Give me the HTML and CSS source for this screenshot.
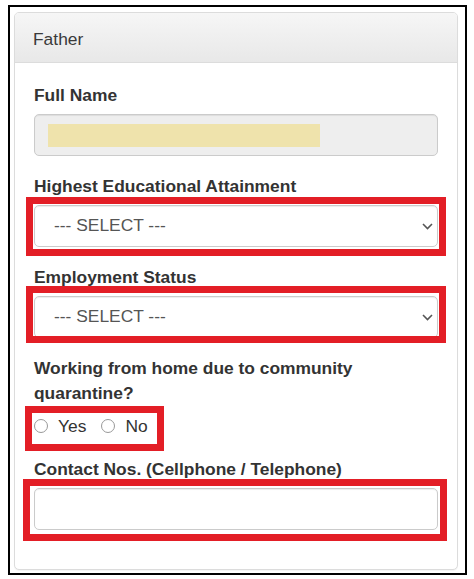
FILE: index.html
```html
<!DOCTYPE html>
<html lang="en">
<head>
<meta charset="utf-8">
<title>Father</title>
<link rel="stylesheet" href="styles.css">
</head>
<body>
<div class="frame">
  <div class="panel">
    <div class="panel-heading">Father</div>
    <div class="panel-body">
      <div class="form-group">
        <label class="control-label">Full Name</label>
        <div class="form-control is-readonly"><span class="redact"></span></div>
      </div>

      <div class="form-group">
        <label class="control-label">Highest Educational Attainment</label>
        <div class="annot annot-sel1">
          <div class="select-wrap">
            <select class="form-control select"><option>--- SELECT ---</option></select>
            <svg class="chevron" width="11" height="7" viewBox="0 0 11 7"><polyline points="1,1 5.5,5.5 10,1" fill="none" stroke="#555" stroke-width="1.6"/></svg>
          </div>
        </div>
      </div>

      <div class="form-group">
        <label class="control-label">Employment Status</label>
        <div class="annot annot-sel2">
          <div class="select-wrap">
            <select class="form-control select"><option>--- SELECT ---</option></select>
            <svg class="chevron" width="11" height="7" viewBox="0 0 11 7"><polyline points="1,1 5.5,5.5 10,1" fill="none" stroke="#555" stroke-width="1.6"/></svg>
          </div>
        </div>
      </div>

      <div class="form-group radio-group">
        <label class="control-label">Working from home due to community quarantine?</label>
        <div class="annot annot-radio radio-box">
          <label class="radio-inline"><input type="radio" name="wfh"><span>Yes</span></label>
          <label class="radio-inline"><input type="radio" name="wfh"><span>No</span></label>
        </div>
      </div>

      <div class="form-group">
        <label class="control-label">Contact Nos. (Cellphone / Telephone)</label>
        <div class="annot annot-contact">
          <input class="form-control" type="text">
        </div>
      </div>
    </div>
  </div>
</div>
</body>
</html>
```

FILE: styles.css
```css
* { box-sizing: border-box; }

body {
  margin: 0;
  background: #fff;
  font-family: "Liberation Sans", Arial, sans-serif;
  font-size: 17.4px;
  line-height: 24.6px;
  color: #333;
}

.frame {
  margin: 5px 0 0 8px;
  width: 459px;
  border: 2px solid #000;
  padding: 5px 7px 3px 4px;
}

.panel {
  border: 1px solid #dcdcdc;
  border-radius: 5px;
  box-shadow: 0 1px 1px rgba(0,0,0,.05);
  background: #fff;
}

.panel-heading {
  padding: 13.5px 18px 10.9px;
  background: linear-gradient(#f6f6f6, #e8e8e8);
  border-bottom: 1px solid #dcdcdc;
  border-radius: 4px 4px 0 0;
  color: #3a3a3a;
}

.panel-body {
  padding: 20px 19px 20.4px;
}

.form-group {
  margin-bottom: 18.5px;
}

.control-label {
  display: block;
  font-weight: bold;
  margin-bottom: 6px;
}

.form-control {
  display: block;
  width: 100%;
  height: 42px;
  border: 1px solid #cbcbcb;
  border-radius: 5px;
  background: #fff;
  box-shadow: inset 0 1px 1px rgba(0,0,0,.075);
  font: inherit;
  color: #555;
  padding: 0 18px;
}

.is-readonly {
  background: #eee;
  padding: 9px 13px;
}

.redact {
  display: block;
  width: 272px;
  height: 23px;
  background: #efe3ac;
}

.select-wrap {
  position: relative;
}

.select {
  appearance: none;
  -webkit-appearance: none;
  padding-left: 19px;
}

.chevron {
  position: absolute;
  right: 5px;
  top: 18px;
}

.annot {
  position: relative;
}

.annot::after {
  content: "";
  position: absolute;
  border: 7px solid #e31e26;
  pointer-events: none;
}

.annot-sel1::after { top: -8px; bottom: -9px; left: -8px; right: -8px; }
.annot-sel2::after { top: -10px; bottom: -5px; left: -8px; right: -8px; }
.annot-radio::after { top: -8px; bottom: -8px; left: -9px; right: -8px; }
.annot-contact::after { top: -9px; bottom: -11px; left: -11px; right: -9px; }

.radio-group {
  margin-bottom: 14px;
}

.radio-box {
  display: flex;
  width: 122px;
  height: 29px;
  margin-top: 9px;
  gap: 15px;
  font-weight: normal;
}

.radio-inline {
  display: flex;
  align-items: flex-start;
  gap: 10px;
  color: #333;
}

.radio-inline input {
  appearance: none;
  -webkit-appearance: none;
  width: 14px;
  height: 14px;
  margin: 5px 0 0;
  border: 1px solid #999;
  border-radius: 50%;
  background: #fff;
}
```
